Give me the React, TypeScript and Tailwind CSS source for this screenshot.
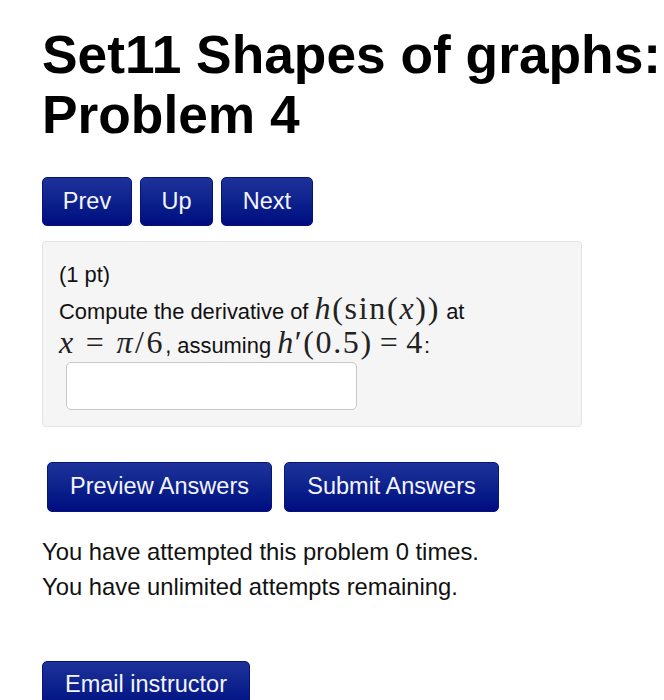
import React from "react";

const btn =
  "rounded-[5px] border border-[#06137a] bg-linear-to-b from-[#1d3299] to-[#010b80] text-[#f4f4ff] text-[23.5px] leading-none flex items-center justify-center";

function I({ children }: { children: React.ReactNode }) {
  return <i className="italic">{children}</i>;
}

export default function App() {
  return (
    <div className="min-h-[700px] bg-white pl-[42px] pt-[25px] font-['Liberation_Sans',Arial,sans-serif] text-[#111]">
      <h1 className="text-[53.3px] leading-[60px] font-bold text-black">
        <span className="block whitespace-nowrap">Set11 Shapes of graphs:</span>
        <span className="block whitespace-nowrap">Problem 4</span>
      </h1>

      <div className="mt-[32px] flex gap-[8px]">
        <button className={btn + " h-[49px] w-[90px]"}>Prev</button>
        <button className={btn + " h-[49px] w-[73px]"}>Up</button>
        <button className={btn + " h-[49px] w-[92px]"}>Next</button>
      </div>

      <div className="mt-[15px] w-[540px] rounded-[4px] border border-[#e3e3e3] bg-[#f5f5f5] px-[16px] pt-[16px] pb-[16px] text-[21.9px]">
        <div className="h-[34px] leading-[34px]">(1 pt)</div>
        <div className="h-[34px] leading-[34px] whitespace-nowrap">
          Compute the derivative of{" "}
          <span className="font-['Liberation_Serif','Times_New_Roman',serif] text-[32px] leading-none text-[#222] tracking-[1.7px]">
            <I>h</I>(sin(<I>x</I>))
          </span>{" "}
          at
        </div>
        <div className="h-[35px] leading-[35px] whitespace-nowrap">
          <span className="font-['Liberation_Serif','Times_New_Roman',serif] text-[32px] leading-none text-[#222] tracking-[2.6px]">
            <I>x</I>
            <span className="mx-[10px]">=</span>
            <I>π</I>/6
          </span>
          , assuming{" "}
          <span className="font-['Liberation_Serif','Times_New_Roman',serif] text-[32px] leading-none text-[#222] tracking-[1.6px]">
            <I>h</I>′(0.5)<span className="mx-[7px]">=</span>4
          </span>
          :
        </div>
        <input
          type="text"
          className="mt-[1px] ml-[7px] block h-[48px] w-[291px] rounded-[5px] border border-[#c8c8c8] bg-white outline-none"
        />
      </div>

      <div className="mt-[35px] ml-[5px] flex gap-[12px]">
        <button className={btn + " h-[50px] w-[225px]"}>Preview Answers</button>
        <button className={btn + " h-[50px] w-[215px]"}>Submit Answers</button>
      </div>

      <div className="mt-[22px] text-[23.8px] leading-[35px]">
        <div>You have attempted this problem 0 times.</div>
        <div>You have unlimited attempts remaining.</div>
      </div>

      <div className="mt-[57px] pb-[20px]">
        <button className={btn + " h-[50px] w-[208px] pb-[3px]"}>Email instructor</button>
      </div>
    </div>
  );
}
